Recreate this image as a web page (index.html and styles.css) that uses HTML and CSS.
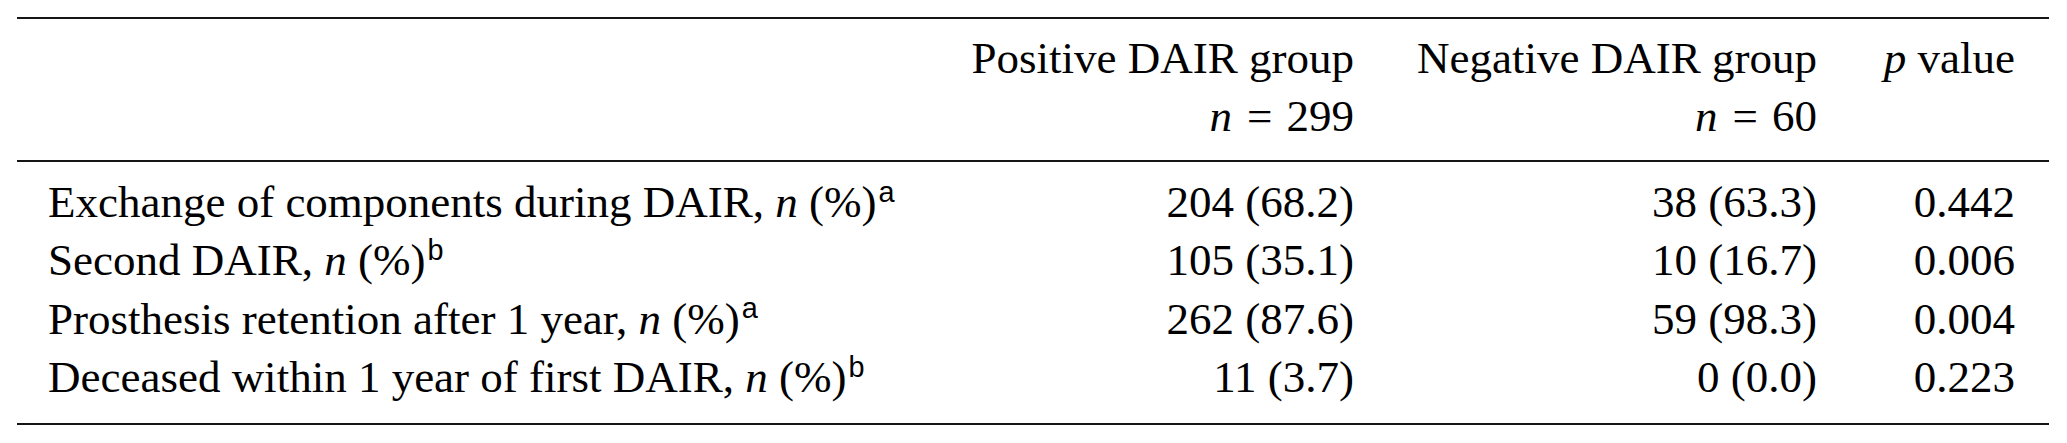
FILE: index.html
```html
<!DOCTYPE html>
<html lang="en">
<head>
<meta charset="utf-8">
<title>DAIR outcome table</title>
<link rel="stylesheet" href="styles.css">
</head>
<body>
<table class="results">
  <colgroup>
    <col class="col-label">
    <col class="col-num">
    <col class="col-num">
    <col class="col-p">
  </colgroup>
  <thead>
    <tr>
      <th class="cell-label"></th>
      <th class="cell-num">Positive DAIR group<br><span class="var">n</span><span class="eq">=</span>299</th>
      <th class="cell-num">Negative DAIR group<br><span class="var">n</span><span class="eq">=</span>60</th>
      <th class="cell-num cell-p"><span class="var">p</span> value<br>&nbsp;</th>
    </tr>
  </thead>
  <tbody>
    <tr class="row-first">
      <td class="cell-label">Exchange of components during DAIR, <span class="var">n</span> (%)<sup class="note">a</sup></td>
      <td class="cell-num">204 (68.2)</td>
      <td class="cell-num">38 (63.3)</td>
      <td class="cell-num cell-p">0.442</td>
    </tr>
    <tr>
      <td class="cell-label">Second DAIR, <span class="var">n</span> (%)<sup class="note">b</sup></td>
      <td class="cell-num">105 (35.1)</td>
      <td class="cell-num">10 (16.7)</td>
      <td class="cell-num cell-p">0.006</td>
    </tr>
    <tr>
      <td class="cell-label">Prosthesis retention after 1 year, <span class="var">n</span> (%)<sup class="note">a</sup></td>
      <td class="cell-num">262 (87.6)</td>
      <td class="cell-num">59 (98.3)</td>
      <td class="cell-num cell-p">0.004</td>
    </tr>
    <tr class="row-last">
      <td class="cell-label">Deceased within 1 year of first DAIR, <span class="var">n</span> (%)<sup class="note">b</sup></td>
      <td class="cell-num">11 (3.7)</td>
      <td class="cell-num">0 (0.0)</td>
      <td class="cell-num cell-p">0.223</td>
    </tr>
  </tbody>
</table>
</body>
</html>
```

FILE: styles.css
```css
html, body {
  margin: 0;
  padding: 0;
  background: #ffffff;
}

body {
  padding: 17px 0 0 17px;
}

.results {
  width: 2032px;
  table-layout: fixed;
  border-collapse: separate;
  border-spacing: 0;
  font-family: "Liberation Serif", "Times New Roman", serif;
  font-size: 45px;
  line-height: 58.3px;
  color: #000000;
}

.col-label { width: 874px; }
.col-num { width: 463px; }
.col-p { width: 232px; }

.results th,
.results td {
  box-sizing: border-box;
  padding: 0;
  font-weight: normal;
  white-space: nowrap;
  vertical-align: top;
}

.results th {
  border-top: 2px solid #151515;
  border-bottom: 2px solid #151515;
  padding-top: 10px;
  padding-bottom: 15px;
  line-height: 58px;
}

.cell-label {
  text-align: left;
  padding-left: 31px !important;
  overflow: visible;
}

.cell-num {
  text-align: right;
}

.cell-p {
  padding-right: 34px !important;
}

.row-first td {
  padding-top: 11px;
}

.row-last td {
  padding-bottom: 17px;
  border-bottom: 2px solid #151515;
}

.var {
  font-style: italic;
}

.eq {
  margin: 0 14px 0 15px;
}

.note {
  font-family: "Liberation Sans", Arial, sans-serif;
  font-size: 0.64em;
  line-height: 0;
  vertical-align: 0.53em;
  margin-left: 2px;
}
```
